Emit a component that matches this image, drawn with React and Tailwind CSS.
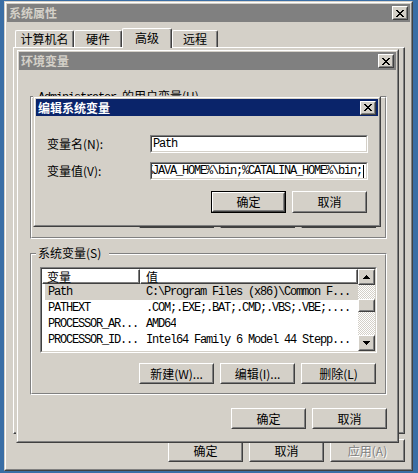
import React from 'react';

const XGlyph = () => (
  <svg width="8" height="7" viewBox="0 0 8 7" shapeRendering="crispEdges" className="block">
    <path fill="#000" d="M0 0h2v1H0z M6 0h2v1H6z M1 1h2v1H1z M5 1h2v1H5z M2 2h4v1H2z M3 3h2v1H3z M2 4h4v1H2z M1 5h2v1H1z M5 5h2v1H5z M0 6h2v1H0z M6 6h2v1H6z" />
  </svg>
);

const UpGlyph = () => (
  <svg width="7" height="4" viewBox="0 0 7 4" shapeRendering="crispEdges" className="block">
    <path fill="#000" d="M3 0h1v1H3z M2 1h3v1H2z M1 2h5v1H1z M0 3h7v1H0z" />
  </svg>
);

const DownGlyph = () => (
  <svg width="7" height="4" viewBox="0 0 7 4" shapeRendering="crispEdges" className="block">
    <path fill="#000" d="M0 0h7v1H0z M1 1h5v1H1z M2 2h3v1H2z M3 3h1v1H3z" />
  </svg>
);

function Bevel({ className = '', children }) {
  return (
    <div className={`border border-t-white border-l-white border-r-[#404040] border-b-[#404040] bg-[#d4d0c8] ${className}`}>
      <div className="w-full h-full border border-t-[#d4d0c8] border-l-[#d4d0c8] border-r-[#808080] border-b-[#808080] flex items-center justify-center">
        {children}
      </div>
    </div>
  );
}

function CloseBtn() {
  return (
    <Bevel className="w-[16px] h-[14px] shrink-0">
      <div className="pr-px">
        <XGlyph />
      </div>
    </Bevel>
  );
}

function Win({ className = '', title, active = false, titleH = 'h-[18px]', children }) {
  return (
    <div className={`absolute border border-t-[#d4d0c8] border-l-[#d4d0c8] border-r-[#404040] border-b-[#404040] ${className}`}>
      <div className="h-full border border-t-white border-l-white border-r-[#808080] border-b-[#808080] bg-[#d4d0c8] p-px flex flex-col">
        <div
          className={`${titleH} shrink-0 flex items-center justify-between pl-[2px] pr-[2px] ${
            active ? 'bg-[#0a246a] text-white' : 'bg-[#808080] text-[#d4d0c8]'
          }`}
        >
          <span className="font-bold text-[12px] leading-[12px]">{title}</span>
          <CloseBtn />
        </div>
        {children}
      </div>
    </div>
  );
}

function Btn({ className = '', children, def = false, disabled = false }) {
  const label = (
    <span
      className={`text-[12px] leading-[12px] whitespace-nowrap ${
        disabled ? 'text-[#808080] [text-shadow:1px_1px_0_#ffffff]' : 'text-black'
      }`}
    >
      {children}
    </span>
  );
  if (def) {
    return (
      <div className={`border border-black ${className}`}>
        <Bevel className="w-full h-full">{label}</Bevel>
      </div>
    );
  }
  return <Bevel className={className}>{label}</Bevel>;
}

function Group({ className = '', label, children }) {
  return (
    <div className={`relative border border-t-[#808080] border-l-[#808080] border-r-white border-b-white ${className}`}>
      <div className="h-full border border-t-white border-l-white border-r-[#808080] border-b-[#808080]">
        {children}
      </div>
      <div className="absolute left-[5px] -top-[7px] pl-[2px] pr-[8px] bg-[#d4d0c8] text-[12px] leading-[12px] whitespace-nowrap">
        {label}
      </div>
    </div>
  );
}

function Tab({ className = '', selected = false, children }) {
  if (selected) {
    return (
      <div
        className={`relative z-10 -mb-px h-[20px] bg-[#d4d0c8] border-l border-t border-r border-white border-r-[#404040] rounded-t-[2px] shadow-[inset_-1px_0_0_#808080] flex items-center justify-center pb-[2px] ${className}`}
      >
        <span className="text-[12px] leading-[12px]">{children}</span>
      </div>
    );
  }
  return (
    <div
      className={`h-[17px] bg-[#d4d0c8] border-l border-t border-r border-white border-r-[#404040] rounded-t-[2px] shadow-[inset_-1px_0_0_#808080] flex items-center justify-center ${className}`}
    >
      <span className="text-[12px] leading-[12px]">{children}</span>
    </div>
  );
}

const mono = "font-['Liberation_Mono',monospace] tracking-[-1.2px] text-[12px] leading-[12px]";

function Sunken({ className = '', children }) {
  return (
    <div className={`border border-t-[#808080] border-l-[#808080] border-r-white border-b-white ${className}`}>
      <div className="w-full h-full border border-t-[#404040] border-l-[#404040] border-r-[#d4d0c8] border-b-[#d4d0c8] bg-white overflow-hidden">
        {children}
      </div>
    </div>
  );
}

const rows = [
  ['Path', 'C:\\Program Files (x86)\\Common F...', true],
  ['PATHEXT', '.COM;.EXE;.BAT;.CMD;.VBS;.VBE;....', false],
  ['PROCESSOR_AR...', 'AMD64', false],
  ['PROCESSOR_ID...', 'Intel64 Family 6 Model 44 Stepp...', false],
];

function ListView() {
  return (
    <Sunken className="mt-[12px] ml-[8px] w-[337px] h-[86px]">
      <div className="h-full flex">
        <div className="w-[316px] flex flex-col overflow-hidden">
          <div className="h-[15px] shrink-0 flex">
            <div className="w-[98px] h-full border-l border-t border-white border-r border-b border-r-[#404040] border-b-[#404040] shadow-[inset_-1px_-1px_0_#808080] flex items-center pl-[4px]">
              <span className="text-[12px] leading-[12px]">变量</span>
            </div>
            <div className="flex-1 h-full border-l border-t border-white border-r border-b border-r-[#404040] border-b-[#404040] shadow-[inset_-1px_-1px_0_#808080] flex items-center pl-[5px]">
              <span className="text-[12px] leading-[12px]">值</span>
            </div>
          </div>
          {rows.map(([k, v, sel]) => (
            <div key={k} className={`h-[16px] shrink-0 ml-[3px] flex items-center ${sel ? 'bg-[#d4d0c8]' : ''}`}>
              <div className={`w-[95px] pl-[3px] whitespace-nowrap overflow-hidden ${mono}`}>{k}</div>
              <div className={`pl-[6px] whitespace-nowrap overflow-hidden ${mono}`}>{v}</div>
            </div>
          ))}
        </div>
        <div className="w-[17px] h-full flex flex-col">
          <Bevel className="w-full h-[16px] shrink-0">
            <UpGlyph />
          </Bevel>
          <div className="flex-1 flex flex-col bg-[repeating-conic-gradient(#d4d0c8_0_25%,#ffffff_0_50%)] bg-[length:2px_2px]">
            <Bevel className="mt-[14px] w-full h-[13px]" />
          </div>
          <Bevel className="w-full h-[16px] shrink-0">
            <DownGlyph />
          </Bevel>
        </div>
      </div>
    </Sunken>
  );
}

export default function App() {
  return (
    <div className="relative w-[418px] h-[473px] overflow-hidden bg-[#3a6ea5] font-['Noto_Sans_CJK_SC','Noto_Sans',sans-serif] text-black text-[12px]">
      {/* 系统属性 */}
      <Win className="left-[4px] top-[1px] w-[409px] h-[470px]" title="系统属性">
        <div className="mt-[6px] ml-[6px] w-[392px] flex flex-col">
          <div className="flex items-end h-[19px] pl-[2px]">
            <Tab className="w-[59px]">计算机名</Tab>
            <Tab className="w-[48px]">硬件</Tab>
            <Tab className="w-[50px]" selected>
              高级
            </Tab>
            <Tab className="w-[46px]">远程</Tab>
          </div>
          <div className="h-[387px] border border-t-white border-l-white border-r-[#404040] border-b-[#404040] shadow-[inset_-1px_-1px_0_#808080]" />
        </div>
        <div className="mt-[5px] flex justify-end gap-[6px] pr-[5px]">
          <Btn className="w-[75px] h-[23px]">确定</Btn>
          <Btn className="w-[75px] h-[23px]">取消</Btn>
          <Btn className="w-[75px] h-[23px]" disabled>
            应用(A)
          </Btn>
        </div>
      </Win>

      {/* 环境变量 */}
      <Win className="left-[16px] top-[49px] w-[383px] h-[394px]" title="环境变量">
        <div className="ml-[11px] w-[357px] flex flex-col">
          <Group
            className="mt-[26px] h-[143px]"
            label={
              <>
                <span className={mono}>Administrator </span>
                <span>的用户变量(U)</span>
              </>
            }
          >
            <div className="h-full flex flex-col justify-end pb-[9px]">
              <div className="flex justify-end gap-[6px] pr-[9px]">
                <Btn className="w-[75px] h-[21px]">新建(N)...</Btn>
                <Btn className="w-[75px] h-[21px]">编辑(E)...</Btn>
                <Btn className="w-[75px] h-[21px]">删除(D)</Btn>
              </div>
            </div>
          </Group>

          <Group className="mt-[14px] h-[142px]" label="系统变量(S)">
            <div className="h-full flex flex-col">
              <ListView />
              <div className="mt-[10px] flex justify-end gap-[6px] pr-[9px]">
                <Btn className="w-[75px] h-[21px]">新建(W)...</Btn>
                <Btn className="w-[75px] h-[21px]">编辑(I)...</Btn>
                <Btn className="w-[75px] h-[21px]">删除(L)</Btn>
              </div>
            </div>
          </Group>

          <div className="mt-[13px] flex justify-end gap-[6px]">
            <Btn className="w-[75px] h-[21px]">确定</Btn>
            <Btn className="w-[75px] h-[21px]">取消</Btn>
          </div>
        </div>
      </Win>

      {/* 编辑系统变量 */}
      <Win active className="left-[33px] top-[96px] w-[348px] h-[131px]" title="编辑系统变量" titleH="h-[17px]">
        <div className="flex flex-col pl-[11px] pr-[10px]">
          <div className="mt-[19px] h-[18px] flex items-center">
            <span className="text-[12px] leading-[12px]">变量名(N):</span>
            <Sunken className="ml-auto w-[218px] h-[18px]">
              <div className="h-full flex items-center pl-[1px]">
                <span className={mono}>Path</span>
              </div>
            </Sunken>
          </div>
          <div className="mt-[9px] h-[18px] flex items-center">
            <span className="text-[12px] leading-[12px]">变量值(V):</span>
            <Sunken className="ml-auto w-[218px] h-[18px]">
              <div className="h-full flex items-center justify-end pr-[2px] overflow-hidden">
                <span className={`${mono} whitespace-nowrap`}>%SystemRoot%;%JAVA_HOME%\bin;%CATALINA_HOME%\bin;</span>
                <span className="w-px h-[13px] bg-black shrink-0 ml-[1px]" />
              </div>
            </Sunken>
          </div>
          <div className="mt-[11px] flex justify-end gap-[6px] pr-px">
            <Btn def className="w-[75px] h-[22px]">
              确定
            </Btn>
            <Btn className="w-[75px] h-[22px]">取消</Btn>
          </div>
        </div>
      </Win>
    </div>
  );
}
